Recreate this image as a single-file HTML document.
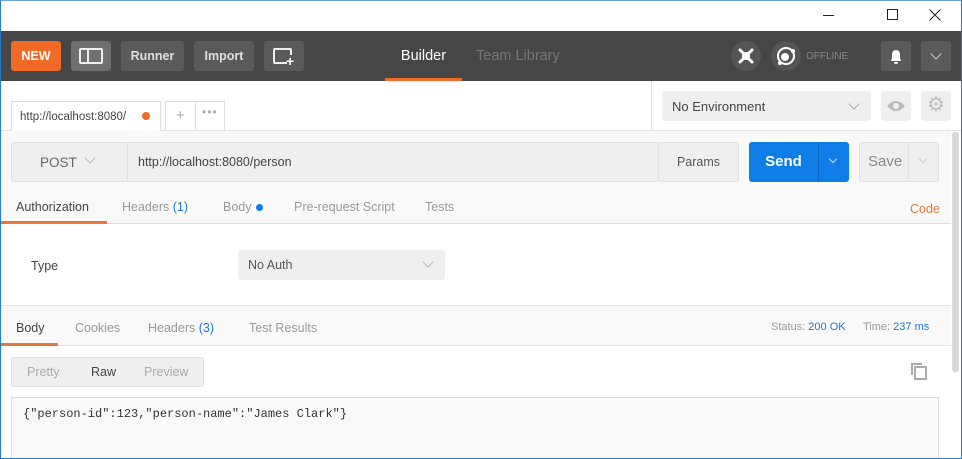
<!DOCTYPE html>
<html style="width:962px;height:459px;overflow:hidden"><head><meta charset="utf-8"><style>
*{box-sizing:border-box;margin:0;padding:0}
body{width:962px;height:459px;overflow:hidden;font-family:"Liberation Sans",sans-serif;background:#fff;position:relative;font-size:12px;color:#505050}
.a{position:absolute}
.btn{position:absolute;top:41px;height:30px;border-radius:3px;background:#5a5a5a;color:#e0e0e0;font-weight:bold;font-size:12.5px;text-align:center;line-height:30px}
.gbox{position:absolute;background:#efefef;border:1px solid #e0e0e0;border-radius:3px}
.chev{position:absolute;width:8px;height:8px;border-right:1.5px solid #aaa;border-bottom:1.5px solid #aaa;transform:rotate(45deg)}
</style></head><body>
<div class="a" style="left:0;top:0;width:962px;height:459px;border:1px solid #2b7bc4;border-top-color:#6aa6d8;z-index:10;pointer-events:none"></div>
<!-- title bar -->
<div class="a" style="left:823px;top:15px;width:11px;height:1px;background:#222"></div>
<div class="a" style="left:887px;top:9px;width:11px;height:11px;border:1px solid #222"></div>
<svg class="a" style="left:929px;top:9px" width="12" height="12"><path d="M0.5 0.5 L11.5 11.5 M11.5 0.5 L0.5 11.5" stroke="#222" stroke-width="1"/></svg>
<!-- toolbar -->
<div class="a" style="left:0;top:31px;width:962px;height:50px;background:#464646"></div>
<div class="btn" style="left:11px;width:50px;background:#f26b26;color:#fff">NEW</div>
<div class="btn" style="left:71px;width:40px;background:#6f6f6f"><div class="a" style="left:8px;top:7px;width:24px;height:16px;border:2px solid #eee;border-radius:2px"></div><div class="a" style="left:16px;top:8px;width:2px;height:15px;background:#eee"></div></div>
<div class="btn" style="left:121px;width:63px">Runner</div>
<div class="btn" style="left:194px;width:60px">Import</div>
<div class="btn" style="left:264px;width:40px"><div class="a" style="left:9px;top:7px;width:19px;height:16px;border:2px solid #eee;border-radius:2px"></div><div class="a" style="left:23px;top:14px;width:9px;height:9px;background:#5a5a5a"></div><div class="a" style="left:22px;top:13px;color:#fff;font-size:14px;line-height:14px">+</div></div>
<div class="a" style="left:385px;top:48px;width:77px;text-align:center;color:#fff;font-size:14.5px">Builder</div>
<div class="a" style="left:385px;top:78px;width:77px;height:3px;background:#f26b26"></div>
<div class="a" style="left:476px;top:48px;color:#777;font-size:14.5px">Team Library</div>
<div class="a" style="left:731px;top:41px;width:30px;height:30px;border-radius:50%;background:#555"><svg width="30" height="30"><g stroke="#fff" stroke-width="3" stroke-linecap="round"><line x1="9" y1="9" x2="21" y2="21"/><line x1="21" y1="9" x2="9" y2="21"/></g><circle cx="15" cy="15" r="4" fill="#fff"/></svg></div>
<div class="a" style="left:771px;top:41px;width:30px;height:30px;border-radius:50%;background:#555"><svg width="30" height="30"><circle cx="15" cy="15" r="8" fill="none" stroke="#fff" stroke-width="2"/><circle cx="14" cy="16" r="4" fill="#fff"/><circle cx="22" cy="10" r="2" fill="#fff"/><circle cx="9" cy="22" r="2" fill="#fff"/></svg></div>
<div class="a" style="left:806px;top:51px;color:#888;font-size:10px">OFFLINE</div>
<div class="btn" style="left:881px;width:30px"><svg width="30" height="30"><path d="M10 20 Q11 18 11 14 Q11 9 15 9 Q19 9 19 14 Q19 18 20 20Z M13 21 h4 a2 2 0 0 1 -4 0" fill="#fff"/></svg></div>
<div class="btn" style="left:921px;width:30px"><div class="chev" style="left:11px;top:9px;border-color:#ccc"></div></div>
<!-- tab area -->
<div class="a" style="left:0;top:81px;width:962px;height:50px;background:#fff"></div>
<div class="a" style="left:651px;top:81px;width:1px;height:50px;background:#e0e0e0"></div>
<div class="a" style="left:0;top:130px;width:962px;height:1px;background:#e3e3e3"></div>
<div class="a" style="left:11px;top:101px;width:150px;height:30px;border:1px solid #ddd;border-bottom:none;background:#fff;font-size:11.5px;padding:9px 0 0 8px;color:#444">http://localhost:8080/</div>
<div class="a" style="left:142px;top:112px;width:8px;height:8px;border-radius:50%;background:#f26b26"></div>
<div class="a" style="left:165px;top:101px;width:60px;height:30px;border:1px solid #ddd;border-bottom:none"></div>
<div class="a" style="left:195px;top:101px;width:1px;height:29px;background:#ddd"></div>
<div class="a" style="left:176px;top:107px;color:#aaa;font-size:15px">+</div>
<div class="a" style="left:202px;top:105px;color:#aaa;font-size:12px;letter-spacing:1px">•••</div>
<div class="gbox" style="left:662px;top:91px;width:209px;height:30px;border:none;font-size:13px;padding:8px 10px;color:#444">No Environment</div>
<div class="chev" style="left:850px;top:100px"></div>
<div class="gbox" style="left:881px;top:91px;width:30px;height:30px;border:none"><svg width="30" height="30"><path d="M6 15 Q15 5 24 15 Q15 25 6 15Z" fill="#bbb"/><circle cx="15" cy="15" r="3" fill="#efefef"/></svg></div>
<div class="gbox" style="left:921px;top:91px;width:30px;height:30px;border:none;color:#bbb;font-size:20px;text-align:center;line-height:28px">⚙</div>
<!-- request area -->
<div class="a" style="left:0;top:131px;width:951px;height:93px;background:#f9f9f9"></div>
<div class="a" style="left:952px;top:132px;width:7px;height:240px;background:#d8d8d8;border-radius:3px"></div>
<div class="gbox" style="left:11px;top:142px;width:648px;height:40px"></div>
<div class="a" style="left:127px;top:143px;width:1px;height:38px;background:#e0e0e0"></div>
<div class="a" style="left:40px;top:155px;font-size:13.5px;color:#666">POST</div>
<div class="chev" style="left:86px;top:154px;border-color:#bbb"></div>
<div class="a" style="left:138px;top:155px;font-size:12.5px;color:#444">http://localhost:8080/person</div>
<div class="a" style="left:658px;top:143px;width:1px;height:38px;background:#e0e0e0"></div>
<div class="gbox" style="left:658px;top:142px;width:81px;height:40px;font-size:12.5px;text-align:center;line-height:38px;color:#555">Params</div>
<div class="a" style="left:749px;top:142px;width:100px;height:40px;background:#0f7de8;border-radius:3px"></div>
<div class="a" style="left:749px;top:153px;width:69px;text-align:center;color:#fff;font-weight:bold;font-size:15px">Send</div>
<div class="a" style="left:818px;top:142px;width:1px;height:40px;background:#0b66c0"></div>
<div class="chev" style="left:830px;top:156px;border-color:#cfe4fa;width:6px;height:6px"></div>
<div class="gbox" style="left:859px;top:142px;width:80px;height:40px"></div>
<div class="a" style="left:868px;top:153px;font-size:15px;color:#888">Save</div>
<div class="a" style="left:908px;top:143px;width:1px;height:38px;background:#e0e0e0"></div>
<div class="chev" style="left:920px;top:156px;width:6px;height:6px;border-color:#ccc"></div>
<div class="a" style="left:16px;top:200px;font-size:12.5px;color:#444">Authorization</div>
<div class="a" style="left:122px;top:200px;font-size:12.5px;color:#999">Headers <span style="color:#1f78c9">(1)</span></div>
<div class="a" style="left:223px;top:200px;font-size:12.5px;color:#999">Body</div>
<div class="a" style="left:256px;top:204px;width:7px;height:7px;border-radius:50%;background:#0f7de8"></div>
<div class="a" style="left:294px;top:200px;font-size:12.5px;color:#999">Pre-request Script</div>
<div class="a" style="left:425px;top:200px;font-size:12.5px;color:#999">Tests</div>
<div class="a" style="left:910px;top:202px;font-size:12.5px;color:#e07a3a">Code</div>
<div class="a" style="left:0;top:223px;width:951px;height:1px;background:#ddd"></div>
<div class="a" style="left:0;top:221px;width:107px;height:3px;background:#e8773b"></div>
<div class="a" style="left:31px;top:259px;font-size:12.5px;color:#444">Type</div>
<div class="gbox" style="left:238px;top:250px;width:207px;height:30px;border:none;padding:8px 10px;font-size:12.5px;color:#555">No Auth</div>
<div class="chev" style="left:424px;top:258px;border-color:#bbb"></div>
<!-- response -->
<div class="a" style="left:0;top:305px;width:951px;height:41px;background:#f9f9f9;border-top:1px solid #e3e3e3;border-bottom:1px solid #e3e3e3"></div>
<div class="a" style="left:0;top:343px;width:58px;height:3px;background:#e8773b"></div>
<div class="a" style="left:16px;top:321px;font-size:12.5px;color:#444">Body</div>
<div class="a" style="left:75px;top:321px;font-size:12.5px;color:#999">Cookies</div>
<div class="a" style="left:148px;top:321px;font-size:12.5px;color:#999">Headers <span style="color:#1f78c9">(3)</span></div>
<div class="a" style="left:249px;top:321px;font-size:12.5px;color:#999">Test Results</div>
<div class="a" style="left:771px;top:321px;font-size:11px;color:#999">Status: <span style="color:#1f78c9">200 OK</span></div>
<div class="a" style="left:863px;top:321px;font-size:11px;color:#999">Time: <span style="color:#1f78c9">237 ms</span></div>
<div class="gbox" style="left:11px;top:357px;width:193px;height:30px"></div>
<div class="a" style="left:27px;top:365px;font-size:12.5px;color:#aaa">Pretty</div>
<div class="a" style="left:91px;top:365px;font-size:12.5px;color:#444">Raw</div>
<div class="a" style="left:144px;top:365px;font-size:12.5px;color:#aaa">Preview</div>
<div class="a" style="left:911px;top:363px;width:11px;height:12px;border:2px solid #aaa;border-right:none;border-bottom:none"></div>
<div class="a" style="left:914px;top:366px;width:13px;height:14px;border:2px solid #aaa;background:#fff"></div>
<div class="a" style="left:11px;top:397px;width:928px;height:62px;background:#f9f9f9;border:1px solid #ddd;border-bottom:none"></div>
<div class="a" style="left:23px;top:407px;font-family:'Liberation Mono',monospace;font-size:12px;color:#333">{"person-id":123,"person-name":"James Clark"}</div>
</body></html>
